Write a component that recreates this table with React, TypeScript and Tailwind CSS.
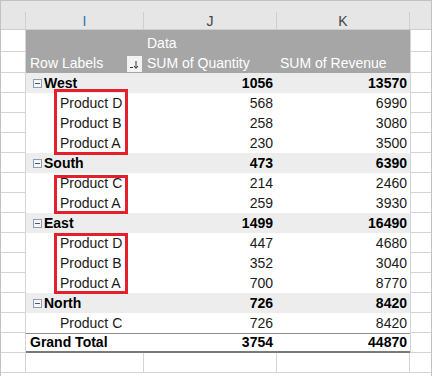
const font = { fontFamily: '"Liberation Sans", Arial, sans-serif' };

type Row = { label: string; qty: number; rev: number; region?: boolean };

const rows: Row[] = [
  { label: "West", qty: 1056, rev: 13570, region: true },
  { label: "Product D", qty: 568, rev: 6990 },
  { label: "Product B", qty: 258, rev: 3080 },
  { label: "Product A", qty: 230, rev: 3500 },
  { label: "South", qty: 473, rev: 6390, region: true },
  { label: "Product C", qty: 214, rev: 2460 },
  { label: "Product A", qty: 259, rev: 3930 },
  { label: "East", qty: 1499, rev: 16490, region: true },
  { label: "Product D", qty: 447, rev: 4680 },
  { label: "Product B", qty: 352, rev: 3040 },
  { label: "Product A", qty: 700, rev: 8770 },
  { label: "North", qty: 726, rev: 8420, region: true },
  { label: "Product C", qty: 726, rev: 8420 },
];

function Collapse() {
  return (
    <span className="mr-[2px] ml-[7px] flex h-[9px] w-[9px] items-center justify-center border border-[#8d9db3] bg-[#f4f6f9]">
      <span className="h-px w-[5px] bg-[#4a5a70]" />
    </span>
  );
}

function SortButton() {
  return (
    <span className="mb-[1px] mr-[2px] flex h-[16px] w-[15px] items-center justify-center bg-[#f3f3f3]">
      <svg width="11" height="11" viewBox="0 0 11 11">
        <line x1="1" y1="8.5" x2="4" y2="8.5" stroke="#333" strokeWidth="1" />
        <line x1="7" y1="2" x2="7" y2="9" stroke="#333" strokeWidth="1" />
        <path d="M5 7 L7 9.5 L9 7" fill="none" stroke="#333" strokeWidth="1" />
      </svg>
    </span>
  );
}

function Side({ children }: { children?: React.ReactNode }) {
  return <>{children}</>;
}

export default function App() {
  return (
    <div
      className="relative h-[376px] w-[432px] overflow-hidden border-x border-t border-[#c2c2c2] bg-white text-[14px]"
      style={font}
    >
      <div className="h-[11px] bg-[#e6e6e6]" />

      <div className="flex h-[18px] border-b border-[#cfcfcf] bg-[#e6e6e6] text-[14px] leading-[18px] text-[#444]">
        <div className="w-[25px] border-r border-[#cfcfcf]" />
        <div className="w-[118px] border-r border-[#cfcfcf] text-center text-[#2e6fb4]">I</div>
        <div className="w-[133px] border-r border-[#cfcfcf] text-center">J</div>
        <div className="w-[133px] border-r border-[#cfcfcf] text-center">K</div>
        <div className="flex-1" />
      </div>

      <div className="flex h-[22px]">
        <div className="w-[25px] border-b border-r border-[#d4d4d4]" />
        <div className="flex w-[384px] items-end bg-[#a6a6a6] text-white">
          <div className="w-[118px]" />
          <div className="w-[133px] pl-[3px] leading-[18px]">Data</div>
        </div>
        <div className="flex-1 border-b border-l border-[#d4d4d4]" />
      </div>
      <div className="flex h-[21px]">
        <div className="w-[25px] border-b border-r border-[#d4d4d4]" />
        <div className="flex w-[384px] items-end bg-[#a6a6a6] leading-[19px] text-white">
          <div className="flex w-[118px] items-end justify-between pl-[4px]">
            <span>Row Labels</span>
            <SortButton />
          </div>
          <div className="w-[133px] pl-[3px]">SUM of Quantity</div>
          <div className="w-[133px] pl-[3px]">SUM of Revenue</div>
        </div>
        <div className="flex-1 border-b border-l border-[#d4d4d4]" />
      </div>

      {rows.map((r, i) => (
        <div key={i} className="flex h-[20px]">
          <div className="w-[25px] border-b border-r border-[#d4d4d4]" />
          <div
            className={
              r.region
                ? "flex w-[384px] items-center bg-[#ededed] font-bold text-black"
                : "flex w-[384px] items-center bg-white text-[#1a1a1a]"
            }
          >
            <div className="flex w-[118px] items-center">
              {r.region ? (
                <Side>
                  <Collapse />
                  <span>{r.label}</span>
                </Side>
              ) : (
                <span className="pl-[34px]">{r.label}</span>
              )}
            </div>
            <div className="w-[133px] pr-[4px] text-right">{r.qty}</div>
            <div className="w-[133px] pr-[3px] text-right">{r.rev}</div>
          </div>
          <div className="flex-1 border-b border-l border-[#d4d4d4]" />
        </div>
      ))}

      <div className="flex h-[20px]">
        <div className="w-[25px] border-b border-r border-[#d4d4d4]" />
        <div className="flex w-[384px] items-center border-y-2 border-t-[#8c8c8c] border-b-[#7a7a7a] font-bold text-black" style={{ borderTopWidth: 1 }}>
          <div className="w-[118px] pl-[4px]">Grand Total</div>
          <div className="w-[133px] pr-[4px] text-right">3754</div>
          <div className="w-[133px] pr-[3px] text-right">44870</div>
        </div>
        <div className="flex-1 border-b border-l border-[#d4d4d4]" />
      </div>

      <div className="flex h-[20px]">
        <div className="w-[25px] border-b border-r border-[#d4d4d4]" />
        <div className="w-[118px] border-b border-r border-[#d4d4d4]" />
        <div className="w-[133px] border-b border-r border-[#d4d4d4]" />
        <div className="w-[133px] border-b border-r border-[#d4d4d4]" />
        <div className="flex-1 border-b border-[#d4d4d4]" />
      </div>

      <div className="pointer-events-none absolute left-[53px] top-[88px] h-[66px] w-[74px] border-[3px] border-[#e3202b]" />
      <div className="pointer-events-none absolute left-[53px] top-[174px] h-[39px] w-[74px] border-[3px] border-[#e3202b]" />
      <div className="pointer-events-none absolute left-[53px] top-[232px] h-[61px] w-[74px] border-[3px] border-[#e3202b]" />
    </div>
  );
}
